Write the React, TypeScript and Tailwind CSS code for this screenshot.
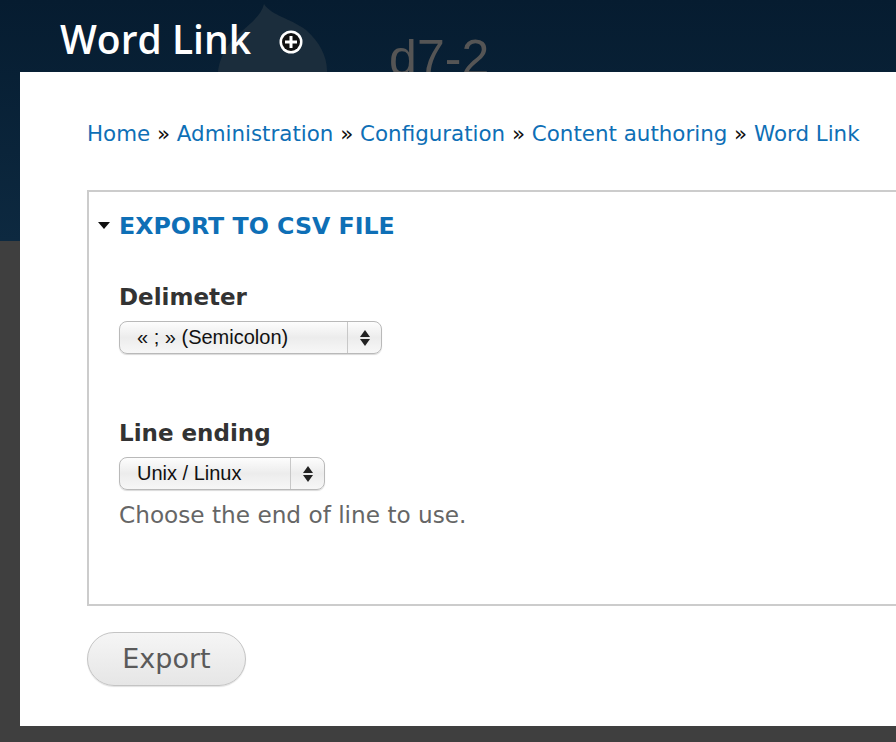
import { useState } from 'react'

const ui = '"DejaVu Sans", "Open Sans", sans-serif'
const helv = '"Liberation Sans", Arial, sans-serif'

function PlusCircle() {
  return (
    <svg width="24" height="24" viewBox="0 0 24 24" className="shrink-0">
      <circle cx="12" cy="12" r="11.5" fill="#fff" />
      <circle cx="12" cy="12" r="9" fill="#111" />
      <rect x="10.5" y="6" width="3" height="12" fill="#fff" />
      <rect x="6" y="10.5" width="12" height="3" fill="#fff" />
    </svg>
  )
}

function Drop() {
  return (
    <svg width="150" height="80" viewBox="0 0 150 80" className="absolute left-[200px] top-0">
      <path
        d="M64 4 C 60 22, 34 32, 24 52 C 16 68, 18 80, 18 80 L 126 80 C 130 62, 122 44, 106 30 C 90 18, 72 16, 64 4 Z"
        fill="#1b2d3c"
      />
    </svg>
  )
}

function SelectBox({ label, width }: { label: string; width: string }) {
  return (
    <div
      className={`flex h-[33px] ${width} items-stretch rounded-[8px] border border-[#b9b9b9] bg-gradient-to-b from-[#fdfdfd] via-[#ececec] to-[#f7f7f7] shadow-[0_1px_1px_rgba(0,0,0,0.15)]`}
      style={{ fontFamily: helv }}
    >
      <span className="flex-1 pl-[17px] text-[20px] leading-[31px] text-[#111]">{label}</span>
      <span className="flex w-[34px] flex-col items-center justify-center gap-[2px] border-l border-[#c8c8c8]">
        <svg width="10" height="7" viewBox="0 0 10 7"><path d="M5 0 L10 7 L0 7 Z" fill="#222" /></svg>
        <svg width="10" height="7" viewBox="0 0 10 7"><path d="M0 0 L10 0 L5 7 Z" fill="#222" /></svg>
      </span>
    </div>
  )
}

export default function App() {
  const [open] = useState(true)
  const crumbs = ['Home', 'Administration', 'Configuration', 'Content authoring', 'Word Link']

  return (
    <div className="relative h-[742px] w-[896px] overflow-hidden bg-[#3f3f3f]" style={{ fontFamily: ui }}>
      <div className="relative h-[241px] bg-gradient-to-b from-[#061c30] to-[#0d2940]">
        <Drop />
        <div className="relative flex items-start pl-[60px] pt-[13px]">
          <h1
            className="text-[39px] leading-[52px] font-semibold text-white"
            style={{ fontFamily: '"Open Sans", sans-serif' }}
          >
            Word Link
          </h1>
          <span className="ml-[28px] mt-[17px]"><PlusCircle /></span>
          <span className="ml-[86px] mt-[19px] text-[50px] leading-[52px] text-[#555]" style={{ fontFamily: helv }}>
            d7-2
          </span>
        </div>
      </div>

      <div className="absolute left-[20px] top-[72px] h-[654px] w-[876px] bg-white pl-[67px] pt-[48px]">
        <nav className="text-[21.4px] leading-[28px] text-[#111]">
          {crumbs.map((c, i) => (
            <span key={c}>
              {i > 0 && <span> » </span>}
              <a className="text-[#0e6fb6]">{c}</a>
            </span>
          ))}
        </nav>

        <fieldset className="mt-[42px] h-[416px] border-2 border-r-0 border-[#cccccc] pl-[30px]">
          <div className="mt-[18px] flex items-center">
            <svg width="12" height="8" viewBox="0 0 12 8" className="ml-[-21px] mr-[9px]">
              <path d="M0 0 L12 0 L6 7 Z" fill="#111" />
            </svg>
            <span className="text-[23.7px] font-bold leading-[32px] text-[#0e6fb6]">EXPORT TO CSV FILE</span>
          </div>

          {open && (
            <div>
              <div className="mt-[40px] text-[23px] font-bold leading-[30px] text-[#333]">Delimeter</div>
              <div className="mt-[9px]">
                <SelectBox label="« ; » (Semicolon)" width="w-[263px]" />
              </div>

              <div className="mt-[64px] text-[23px] font-bold leading-[30px] text-[#333]">Line ending</div>
              <div className="mt-[9px]">
                <SelectBox label="Unix / Linux" width="w-[206px]" />
              </div>
              <div className="mt-[10px] text-[23.2px] leading-[30px] text-[#666]">Choose the end of line to use.</div>
            </div>
          )}
        </fieldset>

        <button className="mt-[26px] h-[54px] w-[159px] rounded-full border border-[#c4c4c4] bg-gradient-to-b from-[#f5f5f5] to-[#e6e6e6] text-[27px] text-[#5a5a5a] shadow-[0_1px_1px_rgba(0,0,0,0.12)]">
          Export
        </button>
      </div>
    </div>
  )
}
